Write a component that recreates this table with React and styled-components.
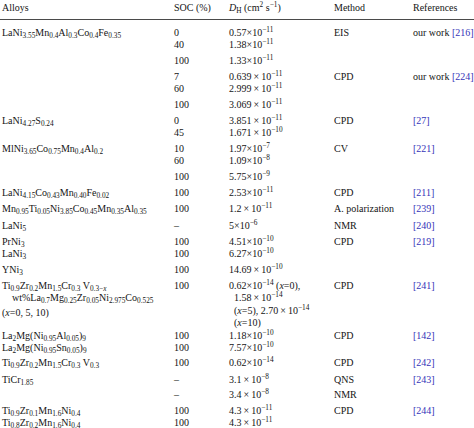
import React from "react";
import styled, { createGlobalStyle } from "styled-components";

const GlobalStyle = createGlobalStyle`
  html, body {
    margin: 0;
    padding: 0;
    background: #fff;
  }
  body {
    font-family: "Liberation Serif", "Times New Roman", serif;
    color: #141414;
  }
`;

const Table = styled.div`
  width: 474px;
  height: 428px;
  overflow: hidden;
  font-size: 10px;
  line-height: 12px;
`;

const Row = styled.div`
  display: grid;
  grid-template-columns: 172px 55px 105px 79px 1fr;
  padding: 0 0 ${(p) => p.$gap ?? 4}px 2px;
`;

const HeadRow = styled(Row)`
  padding-top: 2px;
  padding-bottom: 5px;
  border-bottom: 1.5px solid #4a4a4a;
  margin-bottom: 6.5px;
`;

const Cell = styled.div`
  white-space: nowrap;
`;

const Line = styled.div`
  padding-left: ${(p) => p.$indent || 0}px;
  margin-top: ${(p) => p.$push || 0}px;
`;

const Sub = styled.sub`
  font-size: 7.3px;
  line-height: 0;
  vertical-align: -2px;
`;

const Sup = styled.sup`
  font-size: 7.3px;
  line-height: 0;
  vertical-align: 4px;
`;

const Ref = styled.span`
  color: #3434b8;
`;

const Exp = ({ m, e, wide }) => (
  <>
    {m}
    {wide ? "\u2009×\u2009" : "×"}10<Sup>−{e}</Sup>
  </>
);

const X = () => <i>x</i>;

const rows = [
  {
    alloy: [<>LaNi<Sub>3.55</Sub>Mn<Sub>0.4</Sub>Al<Sub>0.3</Sub>Co<Sub>0.4</Sub>Fe<Sub>0.35</Sub></>],
    soc: ["0", "40"],
    d: [<Exp m="0.57" e="11" />, <Exp m="1.38" e="11" />],
    method: ["EIS"],
    refs: [<>our work <Ref>[216]</Ref></>],
  },
  { soc: ["100"], d: [<Exp m="1.33" e="11" />] },
  {
    soc: ["7", "60"],
    d: [<Exp m="0.639" e="11" wide />, <Exp m="2.999" e="11" wide />],
    method: ["CPD"],
    refs: [<>our work <Ref>[224]</Ref></>],
  },
  { soc: ["100"], d: [<Exp m="3.069" e="11" wide />] },
  {
    alloy: [<>LaNi<Sub>4.27</Sub>S<Sub>0.24</Sub></>],
    soc: ["0", "45"],
    d: [<Exp m="3.851" e="11" wide />, <Exp m="1.671" e="10" wide />],
    method: ["CPD"],
    refs: [<Ref>[27]</Ref>],
  },
  {
    alloy: [<>MlNi<Sub>3.65</Sub>Co<Sub>0.75</Sub>Mn<Sub>0.4</Sub>Al<Sub>0.2</Sub></>],
    soc: ["10", "60"],
    d: [<Exp m="1.97" e="7" />, <Exp m="1.09" e="8" />],
    method: ["CV"],
    refs: [<Ref>[221]</Ref>],
  },
  { soc: ["100"], d: [<Exp m="5.75" e="9" />] },
  {
    alloy: [<>LaNi<Sub>4.15</Sub>Co<Sub>0.43</Sub>Mn<Sub>0.40</Sub>Fe<Sub>0.02</Sub></>],
    soc: ["100"],
    d: [<Exp m="2.53" e="11" />],
    method: ["CPD"],
    refs: [<Ref>[211]</Ref>],
  },
  {
    alloy: [<>Mn<Sub>0.95</Sub>Ti<Sub>0.05</Sub>Ni<Sub>3.85</Sub>Co<Sub>0.45</Sub>Mn<Sub>0.35</Sub>Al<Sub>0.35</Sub></>],
    soc: ["100"],
    d: [<Exp m="1.2" e="11" wide />],
    method: ["A. polarization"],
    refs: [<Ref>[239]</Ref>],
    gap: 5,
  },
  {
    alloy: [<>LaNi<Sub>5</Sub></>],
    soc: ["–"],
    d: [<Exp m="5" e="6" />],
    method: ["NMR"],
    refs: [<Ref>[240]</Ref>],
  },
  {
    alloy: [<>PrNi<Sub>3</Sub></>, <>LaNi<Sub>3</Sub></>],
    soc: ["100", "100"],
    d: [<Exp m="4.51" e="10" />, <Exp m="6.27" e="10" />],
    method: ["CPD"],
    refs: [<Ref>[219]</Ref>],
  },
  {
    alloy: [<>YNi<Sub>3</Sub></>],
    soc: ["100"],
    d: [<Exp m="14.69" e="10" wide />],
  },
  {
    alloy: [
      <>Ti<Sub>0.9</Sub>Zr<Sub>0.2</Sub>Mn<Sub>1.5</Sub>Cr<Sub>0.3</Sub> V<Sub>0.3−<i>x</i></Sub></>,
      { indent: 10, text: <>wt%La<Sub>0.7</Sub>Mg<Sub>0.25</Sub>Zr<Sub>0.05</Sub>Ni<Sub>2.975</Sub>Co<Sub>0.525</Sub></> },
      { push: 3, text: <>(<X />=0, 5, 10)</> },
    ],
    soc: ["100"],
    d: [
      <><Exp m="0.62" e="14" /> (<X />=0),</>,
      { indent: 5, text: <Exp m="1.58" e="14" wide /> },
      { indent: 5, push: 1, text: <>(<X />=5), <Exp m="2.70" e="14" wide /></> },
      { indent: 5, text: <>(<X />=10)</> },
    ],
    method: ["CPD"],
    refs: [<Ref>[241]</Ref>],
    gap: 1,
  },
  {
    alloy: [
      <>La<Sub>2</Sub>Mg(Ni<Sub>0.95</Sub>Al<Sub>0.05</Sub>)<Sub>9</Sub></>,
      <>La<Sub>2</Sub>Mg(Ni<Sub>0.95</Sub>Sn<Sub>0.05</Sub>)<Sub>9</Sub></>,
    ],
    soc: ["100", "100"],
    d: [<Exp m="1.18" e="10" />, <Exp m="7.57" e="10" />],
    method: ["CPD"],
    refs: [<Ref>[142]</Ref>],
    gap: 3,
  },
  {
    alloy: [<>Ti<Sub>0.9</Sub>Zr<Sub>0.2</Sub>Mn<Sub>1.5</Sub>Cr<Sub>0.3</Sub> V<Sub>0.3</Sub></>],
    soc: ["100"],
    d: [<Exp m="0.62" e="14" />],
    method: ["CPD"],
    refs: [<Ref>[242]</Ref>],
    gap: 5,
  },
  {
    alloy: [<>TiCr<Sub>1.85</Sub></>],
    soc: ["–"],
    d: [<Exp m="3.1" e="8" wide />],
    method: ["QNS"],
    refs: [<Ref>[243]</Ref>],
    gap: 3,
  },
  { soc: ["–"], d: [<Exp m="3.4" e="8" wide />], method: ["NMR"] },
  {
    alloy: [
      <>Ti<Sub>0.9</Sub>Zr<Sub>0.1</Sub>Mn<Sub>1.6</Sub>Ni<Sub>0.4</Sub></>,
      <>Ti<Sub>0.8</Sub>Zr<Sub>0.2</Sub>Mn<Sub>1.6</Sub>Ni<Sub>0.4</Sub></>,
    ],
    soc: ["100", "100"],
    d: [<Exp m="4.3" e="11" wide />, <Exp m="4.3" e="11" wide />],
    method: ["CPD"],
    refs: [<Ref>[244]</Ref>],
  },
];

const Lines = ({ items = [] }) =>
  items.map((item, i) => {
    const plain = item && typeof item === "object" && "text" in item;
    return (
      <Line key={i} $indent={plain ? item.indent : 0} $push={plain ? item.push : 0}>
        {plain ? item.text : item}
      </Line>
    );
  });

export default function App() {
  return (
    <>
      <GlobalStyle />
      <Table>
        <HeadRow>
          <Cell>Alloys</Cell>
          <Cell>SOC (%)</Cell>
          <Cell>
            <i>D</i>
            <Sub>H</Sub> (cm<Sup>2</Sup> s<Sup>−1</Sup>)
          </Cell>
          <Cell>Method</Cell>
          <Cell>References</Cell>
        </HeadRow>
        {rows.map((r, i) => (
          <Row key={i} $gap={r.gap}>
            <Cell><Lines items={r.alloy} /></Cell>
            <Cell><Lines items={r.soc} /></Cell>
            <Cell><Lines items={r.d} /></Cell>
            <Cell><Lines items={r.method} /></Cell>
            <Cell><Lines items={r.refs} /></Cell>
          </Row>
        ))}
      </Table>
    </>
  );
}
